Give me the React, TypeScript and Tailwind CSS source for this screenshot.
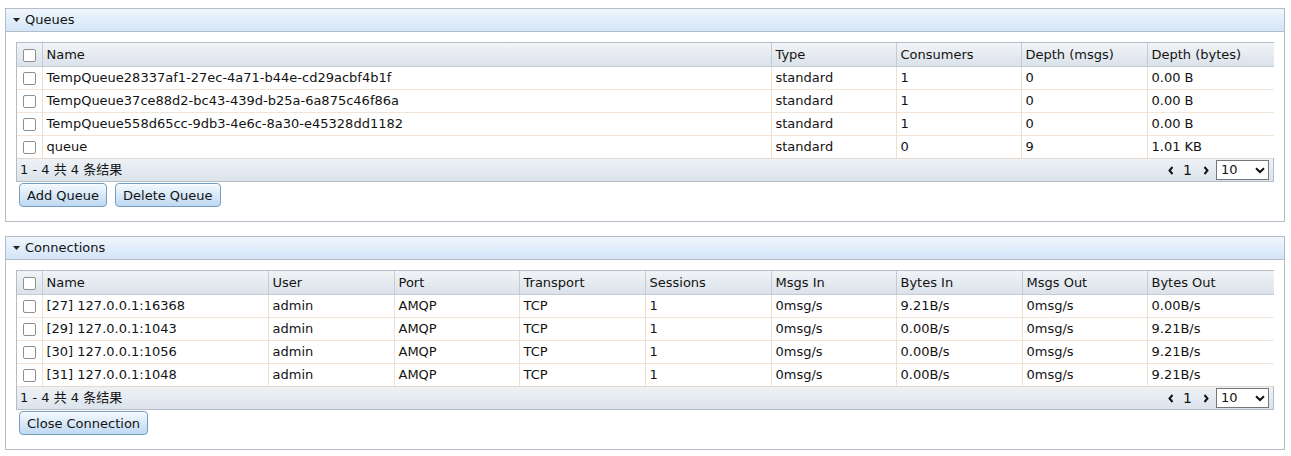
import React from "react";

const font = { fontFamily: '"DejaVu Sans", Verdana, "Noto Sans CJK SC", sans-serif' };

function Check() {
  return <span className="inline-block w-[13px] h-[13px] border border-[#8f8f8f] rounded-[2px] bg-white align-middle" />;
}

function Arrow() {
  return (
    <svg width="7" height="4" viewBox="0 0 7 4" className="mr-[5px]">
      <path d="M0 0 L7 0 L3.5 4 Z" fill="#222" />
    </svg>
  );
}

function Button({ label }: { label: string }) {
  return (
    <button className="h-[24px] px-[7px] border border-[#759dc0] rounded-[4px] bg-gradient-to-b from-[#f4f9fe] to-[#bfd9f3] text-[13px] text-[#131313] leading-none shadow-[inset_0_1px_0_rgba(255,255,255,0.7)]">
      {label}
    </button>
  );
}

function Footer() {
  return (
    <div className="h-[23px] flex items-center justify-between border-t border-[#e6d9cc] bg-gradient-to-b from-[#eef2f6] to-[#dbe3eb] pl-[3px] pr-[4px] text-[13px] text-[#131313]">
      <span>1 - 4 共 4 条结果</span>
      <div className="flex items-center">
        <svg width="6" height="9" viewBox="0 0 6 9" className="mr-[9px]">
          <path d="M4.5 1 L1.5 4.5 L4.5 8" stroke="#111" strokeWidth="2" fill="none" />
        </svg>
        <span className="text-[14px] mr-[11px]">1</span>
        <svg width="6" height="9" viewBox="0 0 6 9" className="mr-[7px]">
          <path d="M1.5 1 L4.5 4.5 L1.5 8" stroke="#111" strokeWidth="2" fill="none" />
        </svg>
        <div className="w-[53px] h-[20px] border border-[#767676] bg-white flex items-center justify-between pl-[4px] pr-[3px]">
          <span className="text-[13px]">10</span>
          <svg width="10" height="7" viewBox="0 0 10 7">
            <path d="M1 1.2 L5 5 L9 1.2" stroke="#111" strokeWidth="2" fill="none" />
          </svg>
        </div>
      </div>
    </div>
  );
}

function Grid({ cols, widths, rows }: { cols: string[]; widths: number[]; rows: string[][] }) {
  return (
    <div className="border border-[#b5bcc7]">
      <table className="w-full table-fixed border-collapse text-[13px] text-[#131313]">
        <colgroup>
          <col style={{ width: 25 }} />
          {widths.map((w, i) => (
            <col key={i} style={{ width: w }} />
          ))}
        </colgroup>
        <thead>
          <tr className="h-[23px] bg-gradient-to-b from-[#f1f4f7] to-[#dbe2ea]">
            <th className="border-r border-b border-[#c3cbd5] text-center font-normal p-0">
              <Check />
            </th>
            {cols.map((c, i) => (
              <th
                key={c}
                className={`border-b border-[#c3cbd5] text-left font-normal pl-[4px] whitespace-nowrap overflow-hidden ${i < cols.length - 1 ? "border-r" : ""}`}
              >
                {c}
              </th>
            ))}
          </tr>
        </thead>
        <tbody>
          {rows.map((r, ri) => (
            <tr key={ri} className={`h-[23px] bg-white ${ri < rows.length - 1 ? "border-b border-[#f2e4d6]" : ""}`}>
              <td className="border-r border-[#f0dfcd] text-center p-0">
                <Check />
              </td>
              {r.map((v, i) => (
                <td
                  key={i}
                  className={`pl-[4px] whitespace-nowrap overflow-hidden ${i < r.length - 1 ? "border-r border-[#f0dfcd]" : ""}`}
                >
                  {v}
                </td>
              ))}
            </tr>
          ))}
        </tbody>
      </table>
      <Footer />
    </div>
  );
}

function Panel({ title, children }: { title: string; children: React.ReactNode }) {
  return (
    <div className="ml-[5px] mr-[6px] border border-[#b5bcc7] bg-white">
      <div className="h-[23px] flex items-center pl-[7px] border-b border-[#b5bcc7] bg-gradient-to-b from-[#f0f6fd] to-[#d3e5f8] text-[13px] text-[#131313]">
        <Arrow />
        <span>{title}</span>
      </div>
      <div className="pt-[10px] px-[10px] pb-[14px]">{children}</div>
    </div>
  );
}

export default function App() {
  const queueRows = [
    ["TempQueue28337af1-27ec-4a71-b44e-cd29acbf4b1f", "standard", "1", "0", "0.00 B"],
    ["TempQueue37ce88d2-bc43-439d-b25a-6a875c46f86a", "standard", "1", "0", "0.00 B"],
    ["TempQueue558d65cc-9db3-4e6c-8a30-e45328dd1182", "standard", "1", "0", "0.00 B"],
    ["queue", "standard", "0", "9", "1.01 KB"],
  ];
  const connRows = [
    ["[27] 127.0.0.1:16368", "admin", "AMQP", "TCP", "1", "0msg/s", "9.21B/s", "0msg/s", "0.00B/s"],
    ["[29] 127.0.0.1:1043", "admin", "AMQP", "TCP", "1", "0msg/s", "0.00B/s", "0msg/s", "9.21B/s"],
    ["[30] 127.0.0.1:1056", "admin", "AMQP", "TCP", "1", "0msg/s", "0.00B/s", "0msg/s", "9.21B/s"],
    ["[31] 127.0.0.1:1048", "admin", "AMQP", "TCP", "1", "0msg/s", "0.00B/s", "0msg/s", "9.21B/s"],
  ];
  return (
    <div className="w-[1291px] h-[456px] bg-white pt-[8px]" style={font}>
      <Panel title="Queues">
        <Grid
          cols={["Name", "Type", "Consumers", "Depth (msgs)", "Depth (bytes)"]}
          widths={[729, 125, 125, 126, 127]}
          rows={queueRows}
        />
        <div className="flex gap-[8px] mt-[1px] pl-[3px]">
          <Button label="Add Queue" />
          <Button label="Delete Queue" />
        </div>
      </Panel>
      <div className="h-[14px]" />
      <Panel title="Connections">
        <Grid
          cols={["Name", "User", "Port", "Transport", "Sessions", "Msgs In", "Bytes In", "Msgs Out", "Bytes Out"]}
          widths={[226, 126, 125, 126, 126, 125, 126, 125, 127]}
          rows={connRows}
        />
        <div className="flex gap-[8px] mt-[1px] pl-[3px]">
          <Button label="Close Connection" />
        </div>
      </Panel>
    </div>
  );
}
